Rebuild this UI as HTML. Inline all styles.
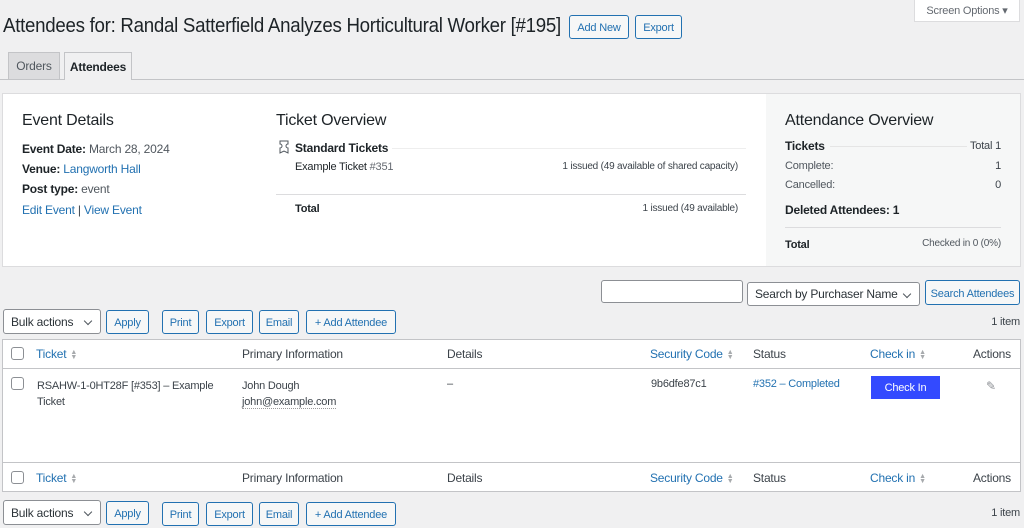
<!DOCTYPE html>
<html><head><meta charset="utf-8"><style>
*{box-sizing:border-box;margin:0;padding:0}
body{width:1024px;height:528px;background:#f0f0f1;font-family:"Liberation Sans",sans-serif;color:#3c434a;font-size:12px;letter-spacing:-0.2px;position:relative;overflow:hidden}
.a{position:absolute;white-space:nowrap}
.b{position:absolute;border:1px solid #2271b1;border-radius:3px;color:#2271b1;background:#f6f7f7;font-size:11px;display:flex;align-items:center;justify-content:center;padding-top:2px}
.lnk{color:#2271b1}
.sel{position:absolute;border:1px solid #8c8f94;border-radius:3px;background:#fff;color:#2c3338;font-size:12px;padding-left:7px;display:flex;align-items:center}
.sel:after{content:"";position:absolute;right:9px;top:8px;width:5px;height:5px;border-right:1.5px solid #50575e;border-bottom:1.5px solid #50575e;transform:rotate(45deg)}
.cb{position:absolute;width:13px;height:13px;border:1px solid #8c8f94;border-radius:3px;background:#fff}
.sort{display:inline-block;font-size:7px;line-height:5px;color:#a7aaad;vertical-align:middle;margin-left:4px}
.hr{position:absolute;height:1px;background:#dcdcde}
</style></head><body>
<div class="a" style="left:914px;top:-1px;width:106px;height:23px;background:#fff;border:1px solid #dcdcde;border-top:none;font-size:11px;color:#646970;display:flex;align-items:center;justify-content:center">Screen Options ▾</div>
<div class="a" style="left:3px;top:15px;font-size:20px;color:#1d2327;letter-spacing:-0.3px;transform:scaleX(0.935);transform-origin:0 0">Attendees for: Randal Satterfield Analyzes Horticultural Worker [#195]</div>
<div class="b" style="left:569px;top:15px;width:60px;height:24px">Add New</div>
<div class="b" style="left:635px;top:15px;width:47px;height:24px">Export</div>
<div class="hr" style="left:0;top:79px;width:1024px;background:#c3c4c7"></div>
<div class="a" style="left:8px;top:52px;width:52px;height:27px;background:#dcdcde;border:1px solid #c3c4c7;border-bottom:none;font-size:12px;color:#50575e;display:flex;align-items:center;justify-content:center">Orders</div>
<div class="a" style="left:64px;top:52px;width:68px;height:28px;background:#f0f0f1;border:1px solid #c3c4c7;border-bottom:none;font-size:12px;font-weight:bold;color:#1d2327;display:flex;align-items:center;justify-content:center">Attendees</div>
<div class="a" style="left:2px;top:93px;width:1019px;height:174px;background:#fff;border:1px solid #dcdcde"></div>
<div class="a" style="left:766px;top:94px;width:254px;height:172px;background:#f6f7f7"></div>
<div class="a" style="left:22px;top:112px;font-size:16px;color:#1d2327">Event Details</div>
<div class="a" style="left:22px;top:142px;color:#1d2327"><b style="font-weight:600">Event Date:</b> <span style="color:#50575e">March 28, 2024</span></div>
<div class="a" style="left:22px;top:162px;color:#1d2327"><b style="font-weight:600">Venue:</b> <span class="lnk">Langworth Hall</span></div>
<div class="a" style="left:22px;top:182px;color:#1d2327"><b style="font-weight:600">Post type:</b> <span style="color:#50575e">event</span></div>
<div class="a" style="left:22px;top:203px"><span class="lnk">Edit Event</span> | <span class="lnk">View Event</span></div>
<div class="a" style="left:276px;top:112px;font-size:16px;color:#1d2327">Ticket Overview</div>
<svg class="a" style="left:278px;top:140px" width="12" height="14" viewBox="0 0 12 14"><path d="M2 1h8v3a2 2 0 0 0 0 4v5l-4-2-4 2V8a2 2 0 0 0 0-4z" fill="none" stroke="#50575e" stroke-width="1"/></svg>
<div class="a" style="left:295px;top:141px;font-weight:bold;color:#1d2327">Standard Tickets</div>
<div class="hr" style="left:392px;top:148px;width:354px;background:#eee"></div>
<div class="a" style="left:295px;top:161px;font-size:11px;color:#1d2327">Example Ticket <span style="color:#646970">#351</span></div>
<div class="a" style="right:286px;top:161px;font-size:10px;color:#3c434a">1 issued (49 available of shared capacity)</div>
<div class="hr" style="left:276px;top:194px;width:470px"></div>
<div class="a" style="left:295px;top:203px;font-size:11px;font-weight:bold;color:#1d2327">Total</div>
<div class="a" style="right:286px;top:203px;font-size:10px">1 issued (49 available)</div>
<div class="a" style="left:785px;top:112px;font-size:16px;color:#1d2327">Attendance Overview</div>
<div class="a" style="left:785px;top:139px;font-weight:bold;color:#1d2327">Tickets</div>
<div class="hr" style="left:830px;top:146px;width:137px;background:#e5e5e5"></div>
<div class="a" style="right:23px;top:140px;font-size:11px">Total 1</div>
<div class="a" style="left:785px;top:160px;font-size:11px;color:#50575e">Complete:</div>
<div class="a" style="right:23px;top:160px;font-size:11px">1</div>
<div class="a" style="left:785px;top:179px;font-size:11px;color:#50575e">Cancelled:</div>
<div class="a" style="right:23px;top:179px;font-size:11px">0</div>
<div class="a" style="left:785px;top:203px;color:#1d2327;font-weight:600">Deleted Attendees: 1</div>
<div class="hr" style="left:785px;top:227px;width:216px"></div>
<div class="a" style="left:785px;top:239px;font-size:11px;font-weight:bold;color:#1d2327">Total</div>
<div class="a" style="right:23px;top:238px;font-size:10px;color:#50575e">Checked in 0 (0%)</div>
<div class="a" style="left:601px;top:280px;width:142px;height:23px;background:#fff;border:1px solid #8c8f94;border-radius:3px"></div>
<div class="sel" style="left:747px;top:282px;width:173px;height:24px">Search by Purchaser Name</div>
<div class="b" style="left:925px;top:280px;width:95px;height:25px">Search Attendees</div>
<div class="sel" style="left:3px;top:309px;width:98px;height:25px">Bulk actions</div>
<div class="b" style="left:106px;top:310px;width:43px;height:24px">Apply</div>
<div class="b" style="left:162px;top:310px;width:37px;height:24px">Print</div>
<div class="b" style="left:206px;top:310px;width:47px;height:24px">Export</div>
<div class="b" style="left:259px;top:310px;width:40px;height:24px">Email</div>
<div class="b" style="left:306px;top:310px;width:90px;height:24px">+ Add Attendee</div>
<div class="a" style="right:4px;top:316px;font-size:11px">1 item</div>
<div class="a" style="left:2px;top:339px;width:1019px;height:153px;background:#fff;border:1px solid #c3c4c7"></div>
<div class="hr" style="left:3px;top:368px;width:1017px;background:#c3c4c7"></div>
<div class="hr" style="left:3px;top:462px;width:1017px;background:#c3c4c7"></div>
<div class="cb" style="left:11px;top:347px"></div>
<div class="a lnk" style="left:36px;top:347px">Ticket<span class="sort">▲<br>▼</span></div>
<div class="a" style="left:242px;top:347px">Primary Information</div>
<div class="a" style="left:447px;top:347px">Details</div>
<div class="a lnk" style="left:650px;top:347px">Security Code<span class="sort">▲<br>▼</span></div>
<div class="a" style="left:753px;top:347px">Status</div>
<div class="a lnk" style="left:870px;top:347px">Check in<span class="sort">▲<br>▼</span></div>
<div class="a" style="left:973px;top:347px">Actions</div>
<div class="cb" style="left:11px;top:377px"></div>
<div class="a" style="left:37px;top:378px;font-size:11px;line-height:16px">RSAHW-1-0HT28F [#353] – Example<br>Ticket</div>
<div class="a" style="left:242px;top:378px;font-size:11px;line-height:16px;color:#3c434a">John Dough<br><span style="border-bottom:1px dotted #999">john@example.com</span></div>
<div class="a" style="left:447px;top:378px;font-size:11px">–</div>
<div class="a" style="left:651px;top:378px;font-size:11px">9b6dfe87c1</div>
<div class="a lnk" style="left:753px;top:378px;font-size:11px">#352 – Completed</div>
<div class="a" style="left:871px;top:376px;width:69px;height:23px;background:#334aff;color:#fff;font-size:11px;display:flex;align-items:center;justify-content:center">Check In</div>
<div class="a" style="left:986px;top:379px;font-size:12px;color:#8c8f94">✎</div>
<div class="cb" style="left:11px;top:471px"></div>
<div class="a lnk" style="left:36px;top:471px">Ticket<span class="sort">▲<br>▼</span></div>
<div class="a" style="left:242px;top:471px">Primary Information</div>
<div class="a" style="left:447px;top:471px">Details</div>
<div class="a lnk" style="left:650px;top:471px">Security Code<span class="sort">▲<br>▼</span></div>
<div class="a" style="left:753px;top:471px">Status</div>
<div class="a lnk" style="left:870px;top:471px">Check in<span class="sort">▲<br>▼</span></div>
<div class="a" style="left:973px;top:471px">Actions</div>
<div class="sel" style="left:3px;top:500px;width:98px;height:25px">Bulk actions</div>
<div class="b" style="left:106px;top:501px;width:43px;height:24px">Apply</div>
<div class="b" style="left:162px;top:502px;width:37px;height:24px">Print</div>
<div class="b" style="left:206px;top:502px;width:47px;height:24px">Export</div>
<div class="b" style="left:259px;top:502px;width:40px;height:24px">Email</div>
<div class="b" style="left:306px;top:502px;width:90px;height:24px">+ Add Attendee</div>
<div class="a" style="right:4px;top:507px;font-size:11px">1 item</div>
</body></html>
